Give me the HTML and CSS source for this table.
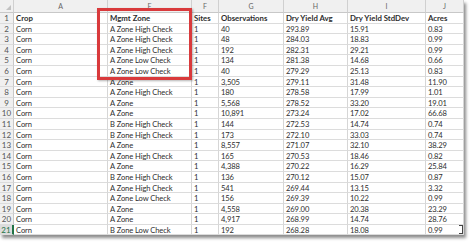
FILE: index.html
```html
<!DOCTYPE html>
<html>
<head>
<meta charset="utf-8">
<link rel="stylesheet" href="styles.css">
</head>
<body>
<div class="frame">
  <div class="sheet">
    <div class="row head">
      <div class="corner"><span class="tri"></span></div>
      <div class="hc">A</div><div class="hc">E</div><div class="hc">F</div><div class="hc">G</div><div class="hc">H</div><div class="hc">I</div><div class="hc">J</div>
    </div>
    <div class="row bold"><div class="rn">1</div><div>Crop</div><div>Mgmt Zone</div><div>Sites</div><div>Observations</div><div>Dry Yield Avg</div><div>Dry Yield StdDev</div><div>Acres</div></div>
    <div class="row"><div class="rn">2</div><div>Corn</div><div>A Zone High Check</div><div>1</div><div>40</div><div>293.89</div><div>15.91</div><div>0.83</div></div>
    <div class="row"><div class="rn">3</div><div>Corn</div><div>A Zone High Check</div><div>1</div><div>48</div><div>284.03</div><div>18.83</div><div>0.99</div></div>
    <div class="row"><div class="rn">4</div><div>Corn</div><div>A Zone High Check</div><div>1</div><div>192</div><div>282.31</div><div>29.21</div><div>0.99</div></div>
    <div class="row"><div class="rn">5</div><div>Corn</div><div>A Zone Low Check</div><div>1</div><div>134</div><div>281.38</div><div>14.68</div><div>0.66</div></div>
    <div class="row"><div class="rn">6</div><div>Corn</div><div>A Zone Low Check</div><div>1</div><div>40</div><div>279.29</div><div>25.13</div><div>0.83</div></div>
    <div class="row"><div class="rn">7</div><div>Corn</div><div>A Zone</div><div>1</div><div>3,505</div><div>279.11</div><div>31.48</div><div>11.90</div></div>
    <div class="row"><div class="rn">8</div><div>Corn</div><div>A Zone High Check</div><div>1</div><div>180</div><div>278.58</div><div>17.99</div><div>1.01</div></div>
    <div class="row"><div class="rn">9</div><div>Corn</div><div>A Zone</div><div>1</div><div>5,568</div><div>278.52</div><div>33.20</div><div>19.01</div></div>
    <div class="row"><div class="rn">10</div><div>Corn</div><div>A Zone</div><div>1</div><div>10,891</div><div>273.24</div><div>17.02</div><div>66.68</div></div>
    <div class="row"><div class="rn">11</div><div>Corn</div><div>B Zone High Check</div><div>1</div><div>144</div><div>272.53</div><div>14.74</div><div>0.74</div></div>
    <div class="row"><div class="rn">12</div><div>Corn</div><div>B Zone High Check</div><div>1</div><div>173</div><div>272.10</div><div>33.03</div><div>0.74</div></div>
    <div class="row"><div class="rn">13</div><div>Corn</div><div>A Zone</div><div>1</div><div>8,557</div><div>271.07</div><div>32.10</div><div>38.29</div></div>
    <div class="row"><div class="rn">14</div><div>Corn</div><div>A Zone High Check</div><div>1</div><div>165</div><div>270.53</div><div>18.46</div><div>0.82</div></div>
    <div class="row"><div class="rn">15</div><div>Corn</div><div>A Zone</div><div>1</div><div>4,388</div><div>270.22</div><div>16.29</div><div>25.84</div></div>
    <div class="row"><div class="rn">16</div><div>Corn</div><div>B Zone High Check</div><div>1</div><div>136</div><div>270.12</div><div>15.07</div><div>0.87</div></div>
    <div class="row"><div class="rn">17</div><div>Corn</div><div>A Zone High Check</div><div>1</div><div>541</div><div>269.44</div><div>13.15</div><div>3.32</div></div>
    <div class="row"><div class="rn">18</div><div>Corn</div><div>A Zone Low Check</div><div>1</div><div>156</div><div>269.39</div><div>10.22</div><div>0.99</div></div>
    <div class="row"><div class="rn">19</div><div>Corn</div><div>A Zone</div><div>1</div><div>4,558</div><div>269.00</div><div>20.38</div><div>23.29</div></div>
    <div class="row"><div class="rn">20</div><div>Corn</div><div>A Zone</div><div>1</div><div>4,917</div><div>268.99</div><div>14.74</div><div>28.76</div></div>
    <div class="row last"><div class="rn sel">21</div><div>Corn</div><div>B Zone Low Check</div><div>1</div><div>192</div><div>268.28</div><div>18.08</div><div class="selcell">0.99</div></div>
  </div>
  <div class="highlight"></div>
</div>
</body>
</html>
```

FILE: styles.css
```css
html, body {
  margin: 0;
  padding: 0;
  background: #ffffff;
}
.frame {
  position: relative;
  width: 474px;
  height: 244px;
  overflow: hidden;
}
.sheet {
  width: 464px;
  box-shadow: 2px 3px 3px rgba(0, 0, 0, 0.45);
  font-family: Lato, "Liberation Sans", sans-serif;
  font-size: 7.6px;
  letter-spacing: -0.1px;
  color: #2e2e2e;
  background: #fff;
}
.row {
  display: grid;
  grid-template-columns: 14px 94px 84px 27px 65px 64px 78px 38px;
  height: 10.6px;
  line-height: 10.6px;
}
.row > div {
  border-right: 1px solid #d6d6d6;
  border-bottom: 1px solid #dcdcdc;
  padding-left: 2px;
  white-space: nowrap;
  overflow: hidden;
  box-sizing: border-box;
}
.row.head {
  height: 13px;
  line-height: 13px;
  background: #f0f0f0;
}
.row.head > div {
  text-align: center;
  color: #666;
  padding-left: 0;
  border-right: 1px solid #d0d0d0;
  border-bottom: 1px solid #c8c8c8;
  font-size: 7px;
  letter-spacing: 0;
}
.corner {
  position: relative;
}
.tri {
  position: absolute;
  right: 2px;
  bottom: 2px;
  width: 0;
  height: 0;
  border-left: 5px solid transparent;
  border-bottom: 5px solid #c2c2c2;
}
.row > .rn {
  background: #f0f0f0;
  color: #555;
  text-align: center;
  padding-left: 0;
  border-right: 1px solid #c8c8c8;
  font-size: 8px;
  letter-spacing: 0;
}
.row > .rn.sel {
  background: #dcdcdc;
  color: #217346;
  border-right: 2px solid #217346;
}
.bold > div {
  font-weight: bold;
  font-size: 7.8px;
  letter-spacing: 0;
}
.bold > .rn {
  font-weight: normal;
  font-size: 8px;
}
.selcell {
  position: relative;
}
.selcell::after {
  content: "";
  position: absolute;
  right: 0;
  top: 0;
  bottom: 0;
  width: 3px;
  border: 1px solid #444;
  border-left: none;
}
.highlight {
  position: absolute;
  left: 97px;
  top: 8px;
  width: 95px;
  height: 72px;
  box-sizing: border-box;
  border: 3px solid #d93a3c;
  box-shadow: 1px 1px 2px rgba(0, 0, 0, 0.3);
}
```
